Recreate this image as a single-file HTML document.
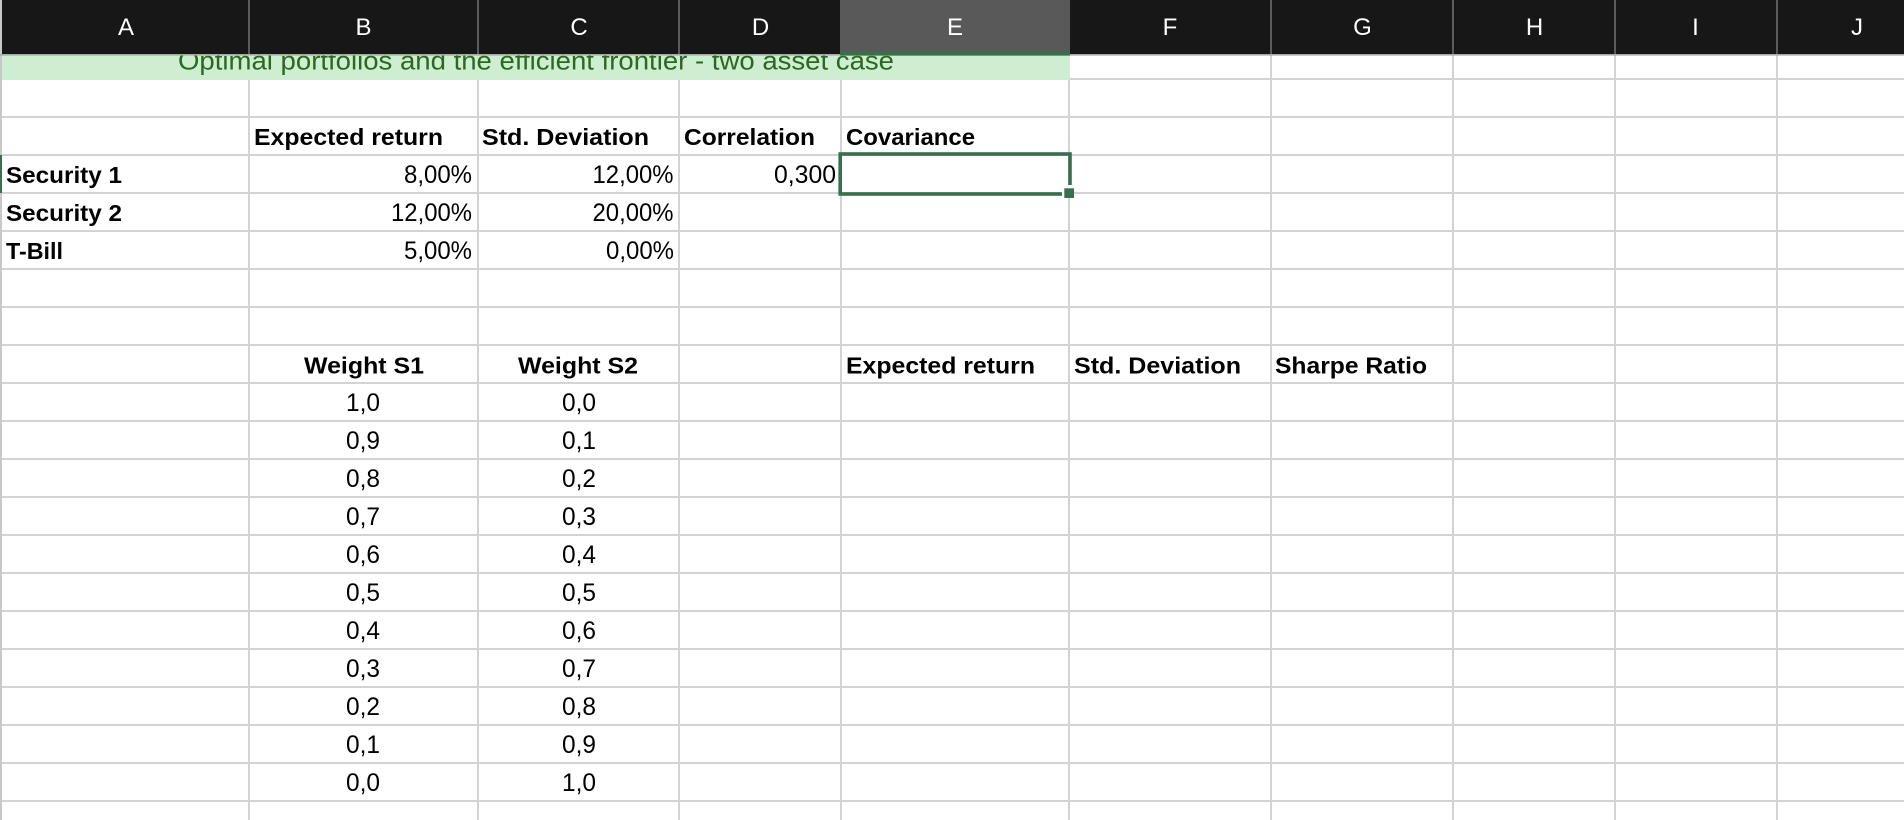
<!DOCTYPE html>
<html><head><meta charset="utf-8"><title>Sheet</title>
<style>
html,body{margin:0;padding:0;background:#fff;width:1904px;height:820px;overflow:hidden}
svg{display:block}
text{font-family:"Liberation Sans",sans-serif;font-size:25px;fill:#000}
.b{font-weight:700;font-size:23.5px}
.h{fill:#fff;font-size:24px;text-anchor:middle}
.t{fill:#2b6a1e;font-size:26px}
.g{stroke:#d3d3d3;stroke-width:2;fill:none}
.s{stroke:#5c5c5c;stroke-width:2;fill:none}
</style></head><body>
<svg width="1904" height="820" viewBox="0 0 1904 820" xmlns="http://www.w3.org/2000/svg">
<rect width="1904" height="820" fill="#fff"/>
<!-- grid -->
<path class="g" d="M2 79H1904M2 117H1904M2 155H1904M2 193H1904M2 231H1904M2 269H1904M2 307H1904M2 345H1904M2 383H1904M2 421H1904M2 459H1904M2 497H1904M2 535H1904M2 573H1904M2 611H1904M2 649H1904M2 687H1904M2 725H1904M2 763H1904M2 801H1904"/>
<path class="g" d="M249 55V820M478 55V820M679 55V820M841 55V820M1069 55V820M1271 55V820M1453 55V820M1615 55V820M1777 55V820"/>
<rect x="0" y="0" width="2" height="820" fill="#c8c8c8"/>
<rect x="0" y="155" width="2" height="38" fill="#38704c"/>
<!-- title fill, clipped under header -->
<rect x="2" y="55" width="1068" height="25" fill="#cdeed0"/>
<text class="t" x="178" y="69.5" textLength="716" lengthAdjust="spacingAndGlyphs">Optimal portfolios and the efficient frontier - two asset case</text>
<!-- header -->
<rect x="2" y="0" width="1902" height="54" fill="#171717"/>
<rect x="840" y="0" width="230" height="52" fill="#595959"/>
<rect x="0" y="54" width="1904" height="1.6" fill="#a8a8a8"/>
<rect x="840" y="52" width="230" height="3.6" fill="#38704c"/>
<path class="s" d="M249 0V54M478 0V54M679 0V54M1271 0V54M1453 0V54M1615 0V54M1777 0V54"/>
<text class="h" x="126" y="35">A</text>
<text class="h" x="363.5" y="35">B</text>
<text class="h" x="579" y="35">C</text>
<text class="h" x="760.5" y="35">D</text>
<text class="h" x="955" y="35">E</text>
<text class="h" x="1170" y="35">F</text>
<text class="h" x="1362.5" y="35">G</text>
<text class="h" x="1534.5" y="35">H</text>
<text class="h" x="1695.5" y="35">I</text>
<text class="h" x="1857" y="35">J</text>
<!-- row 3 headers -->
<text class="b" x="254" y="145" textLength="189" lengthAdjust="spacingAndGlyphs">Expected return</text>
<text class="b" x="482" y="145" textLength="167" lengthAdjust="spacingAndGlyphs">Std. Deviation</text>
<text class="b" x="684" y="145" textLength="131" lengthAdjust="spacingAndGlyphs">Correlation</text>
<text class="b" x="846" y="145" textLength="129" lengthAdjust="spacingAndGlyphs">Covariance</text>
<!-- rows -->
<text class="b" x="6" y="183" textLength="116" lengthAdjust="spacingAndGlyphs">Security 1</text>
<text class="b" x="6" y="221" textLength="116" lengthAdjust="spacingAndGlyphs">Security 2</text>
<text class="b" x="6" y="259" textLength="57" lengthAdjust="spacingAndGlyphs">T-Bill</text>
<text x="404" y="183" textLength="68" lengthAdjust="spacingAndGlyphs">8,00%</text>
<text x="391" y="221" textLength="81" lengthAdjust="spacingAndGlyphs">12,00%</text>
<text x="404" y="259" textLength="68" lengthAdjust="spacingAndGlyphs">5,00%</text>
<text x="592.5" y="183" textLength="81" lengthAdjust="spacingAndGlyphs">12,00%</text>
<text x="592.5" y="221" textLength="81" lengthAdjust="spacingAndGlyphs">20,00%</text>
<text x="606" y="259" textLength="68" lengthAdjust="spacingAndGlyphs">0,00%</text>
<text x="774" y="183" textLength="62" lengthAdjust="spacingAndGlyphs">0,300</text>
<!-- weights headers -->
<text class="b" x="304" y="373.4" textLength="120" lengthAdjust="spacingAndGlyphs">Weight S1</text>
<text class="b" x="518" y="373.4" textLength="120" lengthAdjust="spacingAndGlyphs">Weight S2</text>
<text class="b" x="846" y="373.4" textLength="189" lengthAdjust="spacingAndGlyphs">Expected return</text>
<text class="b" x="1074" y="373.4" textLength="167" lengthAdjust="spacingAndGlyphs">Std. Deviation</text>
<text class="b" x="1275" y="373.4" textLength="152" lengthAdjust="spacingAndGlyphs">Sharpe Ratio</text>
<!-- weights -->
<text x="346" y="411" textLength="34" lengthAdjust="spacingAndGlyphs">1,0</text><text x="562" y="411" textLength="34" lengthAdjust="spacingAndGlyphs">0,0</text>
<text x="346" y="449" textLength="34" lengthAdjust="spacingAndGlyphs">0,9</text><text x="562" y="449" textLength="34" lengthAdjust="spacingAndGlyphs">0,1</text>
<text x="346" y="487" textLength="34" lengthAdjust="spacingAndGlyphs">0,8</text><text x="562" y="487" textLength="34" lengthAdjust="spacingAndGlyphs">0,2</text>
<text x="346" y="525" textLength="34" lengthAdjust="spacingAndGlyphs">0,7</text><text x="562" y="525" textLength="34" lengthAdjust="spacingAndGlyphs">0,3</text>
<text x="346" y="563" textLength="34" lengthAdjust="spacingAndGlyphs">0,6</text><text x="562" y="563" textLength="34" lengthAdjust="spacingAndGlyphs">0,4</text>
<text x="346" y="601" textLength="34" lengthAdjust="spacingAndGlyphs">0,5</text><text x="562" y="601" textLength="34" lengthAdjust="spacingAndGlyphs">0,5</text>
<text x="346" y="639" textLength="34" lengthAdjust="spacingAndGlyphs">0,4</text><text x="562" y="639" textLength="34" lengthAdjust="spacingAndGlyphs">0,6</text>
<text x="346" y="677" textLength="34" lengthAdjust="spacingAndGlyphs">0,3</text><text x="562" y="677" textLength="34" lengthAdjust="spacingAndGlyphs">0,7</text>
<text x="346" y="715" textLength="34" lengthAdjust="spacingAndGlyphs">0,2</text><text x="562" y="715" textLength="34" lengthAdjust="spacingAndGlyphs">0,8</text>
<text x="346" y="753" textLength="34" lengthAdjust="spacingAndGlyphs">0,1</text><text x="562" y="753" textLength="34" lengthAdjust="spacingAndGlyphs">0,9</text>
<text x="346" y="791" textLength="34" lengthAdjust="spacingAndGlyphs">0,0</text><text x="562" y="791" textLength="34" lengthAdjust="spacingAndGlyphs">1,0</text>
<!-- selection -->
<rect x="840.2" y="154" width="229.8" height="40" fill="none" stroke="#38704c" stroke-width="3.6"/>
<rect x="1062" y="185" width="12" height="13" fill="#fff"/>
<rect x="1064.3" y="188.3" width="9.7" height="9.7" fill="#38704c"/>
</svg>
</body></html>
